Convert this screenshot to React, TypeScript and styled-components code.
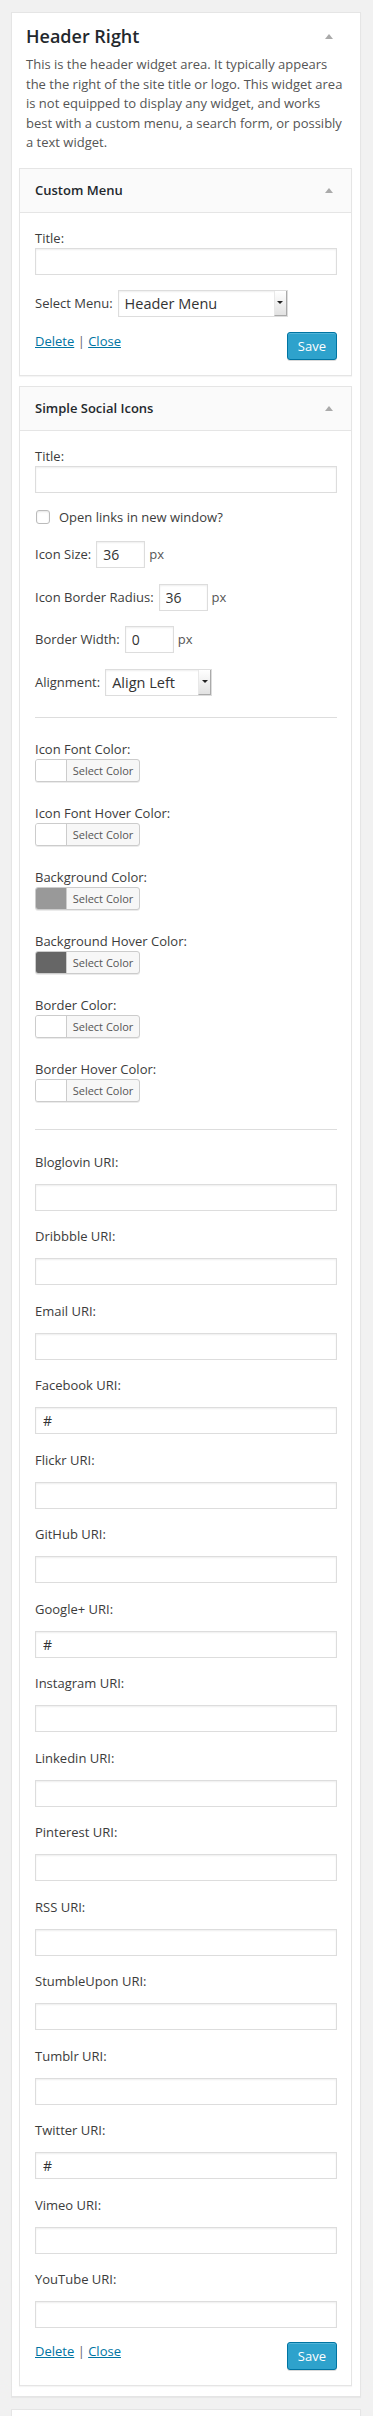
import React from 'react';
import styled, { createGlobalStyle } from 'styled-components';

const GlobalStyle = createGlobalStyle`
  html, body {
    margin: 0;
    padding: 0;
    overflow: hidden;
    background: #f1f1f1;
    font-family: "Open Sans", "Noto Sans", "Liberation Sans", sans-serif;
    color: #444;
  }
  * {
    box-sizing: border-box;
  }
`;

const Page = styled.div`
  padding: 12px 12px 0 11px;
`;

// outer sidebar box ("Header Right")
const SidebarPanel = styled.section`
  background: #fff;
  border: 1px solid #e5e5e5;
  box-shadow: 0 1px 1px rgba(0, 0, 0, 0.04);
  padding: 0 8px 10px 7px;
`;

const SidebarStub = styled(SidebarPanel)`
  margin-top: 12px;
  height: 30px;
`;

const SidebarHead = styled.div`
  display: flex;
  align-items: center;
  justify-content: space-between;
  padding: 11px 19px 0 7px;
`;

const SidebarTitle = styled.h2`
  margin: 0;
  font-size: 18px;
  line-height: 24px;
  font-weight: 600;
  color: #23282d;
`;

const ToggleArrow = styled.span`
  width: 0;
  height: 0;
  border-left: 4px solid transparent;
  border-right: 4px solid transparent;
  border-bottom: 5px solid #aaa;
`;

const Description = styled.p`
  margin: 7px 0 0;
  padding: 0 7px;
  font-size: 13px;
  line-height: 19.5px;
  color: #555;
  white-space: nowrap;
`;

const WidgetList = styled.div`
  display: flex;
  flex-direction: column;
  gap: 10px;
  margin-top: 15px;
`;

const Widget = styled.div`
  background: #fff;
  border: 1px solid #e5e5e5;
  box-shadow: 0 1px 1px rgba(0, 0, 0, 0.04);
`;

const WidgetTop = styled.div`
  display: flex;
  align-items: center;
  justify-content: space-between;
  height: 44px;
  padding: 0 18px 0 15px;
  background: #fafafa;
  border-bottom: 1px solid #e5e5e5;
`;

const WidgetTitle = styled.h3`
  margin: 0;
  font-size: 13px;
  font-weight: 600;
  color: #23282d;
`;

const WidgetBody = styled.div`
  padding: 16px 14px 15px 15px;
`;

const Spaced = styled.div<{ $mt?: number }>`
  margin-top: ${(p) => p.$mt ?? 0}px;
`;

const Label = styled.label`
  display: block;
  font-size: 13px;
  line-height: 18px;
  color: #3c3c3c;
`;

const TextInput = styled.input<{ $mt?: number }>`
  display: block;
  width: 100%;
  height: 27px;
  margin-top: ${(p) => p.$mt ?? 1}px;
  padding: 0 7px;
  border: 1px solid #ddd;
  box-shadow: inset 0 1px 2px rgba(0, 0, 0, 0.07);
  background: #fff;
  font-family: inherit;
  font-size: 14px;
  color: #333;
  outline: none;
`;

const InlineRow = styled.div<{ $mt?: number }>`
  display: flex;
  align-items: center;
  height: 27px;
  margin-top: ${(p) => p.$mt ?? 0}px;
  font-size: 13px;
  color: #3c3c3c;
`;

const SmallInput = styled(TextInput)`
  width: 49px;
  margin: 0 4px 0 5px;
  padding: 0 6px;
  font-size: 14px;
`;

const Unit = styled.span`
  color: #555;
`;

const SelectBox = styled.div<{ $w: number }>`
  display: flex;
  width: ${(p) => p.$w}px;
  height: 27px;
  margin-left: 5px;
  border: 1px solid #ddd;
  background: #fff;
  box-shadow: inset 0 1px 2px rgba(0, 0, 0, 0.07);
`;

const SelectField = styled.select`
  flex: 1;
  min-width: 0;
  appearance: none;
  border: none;
  background: transparent;
  padding: 0 6px;
  font-family: inherit;
  font-size: 14.5px;
  color: #333;
  outline: none;
`;

const SelectCap = styled.span`
  display: flex;
  align-items: center;
  justify-content: center;
  width: 13px;
  background: linear-gradient(#fff, #e2e2e2);
  border-left: 1px solid #e8e8e8;
  border-right: 1px solid #aaa;
  border-bottom: 1px solid #aaa;

  &::after {
    content: '';
    border-left: 3px solid transparent;
    border-right: 3px solid transparent;
    border-top: 3px solid #222;
  }
`;

const CheckRow = styled.label<{ $mt?: number }>`
  display: flex;
  align-items: center;
  height: 18px;
  margin-top: ${(p) => p.$mt ?? 0}px;
  font-size: 13px;
  color: #3c3c3c;
`;

const Checkbox = styled.input`
  appearance: none;
  width: 14px;
  height: 14px;
  margin: 0 9px 0 1px;
  border: 1px solid #bbb;
  border-radius: 3px;
  background: #fff;
  box-shadow: inset 0 1px 2px rgba(0, 0, 0, 0.1);
`;

const Divider = styled.hr<{ $mt: number }>`
  margin: ${(p) => p.$mt}px 0 0;
  border: none;
  border-top: 1px solid #ddd;
`;

const ColorButton = styled.button`
  display: flex;
  width: 105px;
  height: 23px;
  margin-top: 1px;
  padding: 0;
  border: 1px solid #ccc;
  border-radius: 3px;
  overflow: hidden;
  background: #f7f7f7;
  box-shadow: 0 1px 0 rgba(0, 0, 0, 0.08);
`;

const Swatch = styled.span<{ $color: string }>`
  width: 31px;
  height: 100%;
  background: ${(p) => p.$color};
  border-right: 1px solid #ccc;
`;

const ColorText = styled.span`
  flex: 1;
  align-self: center;
  font-family: "Open Sans", "Noto Sans", sans-serif;
  font-size: 11px;
  color: #555;
  text-align: center;
`;

const Actions = styled.div<{ $mt: number }>`
  display: flex;
  justify-content: space-between;
  align-items: flex-start;
  margin-top: ${(p) => p.$mt}px;
`;

const LinkGroup = styled.div`
  font-size: 13px;
  line-height: 18px;
  color: #666;
`;

const ActionLink = styled.a`
  color: #0074a2;
  text-decoration: underline;
`;

const SaveButton = styled.button`
  height: 28px;
  padding: 0 10px;
  border: 1px solid #0074a2;
  border-radius: 3px;
  background: #2ea2cc;
  box-shadow: inset 0 1px 0 rgba(120, 200, 230, 0.5), 0 1px 0 rgba(0, 0, 0, 0.15);
  color: #fff;
  font-family: inherit;
  font-size: 13px;
`;

const colorFields = [
  { label: 'Icon Font Color:', color: '#fff' },
  { label: 'Icon Font Hover Color:', color: '#fff' },
  { label: 'Background Color:', color: '#999' },
  { label: 'Background Hover Color:', color: '#666' },
  { label: 'Border Color:', color: '#fff' },
  { label: 'Border Hover Color:', color: '#fff' },
];

const uriFields = [
  { label: 'Bloglovin URI:', value: '' },
  { label: 'Dribbble URI:', value: '' },
  { label: 'Email URI:', value: '' },
  { label: 'Facebook URI:', value: '#' },
  { label: 'Flickr URI:', value: '' },
  { label: 'GitHub URI:', value: '' },
  { label: 'Google+ URI:', value: '#' },
  { label: 'Instagram URI:', value: '' },
  { label: 'Linkedin URI:', value: '' },
  { label: 'Pinterest URI:', value: '' },
  { label: 'RSS URI:', value: '' },
  { label: 'StumbleUpon URI:', value: '' },
  { label: 'Tumblr URI:', value: '' },
  { label: 'Twitter URI:', value: '#' },
  { label: 'Vimeo URI:', value: '' },
  { label: 'YouTube URI:', value: '' },
];

const WidgetActions: React.FC<{ mt: number }> = ({ mt }) => (
  <Actions $mt={mt}>
    <LinkGroup>
      <ActionLink href="#">Delete</ActionLink> | <ActionLink href="#">Close</ActionLink>
    </LinkGroup>
    <SaveButton type="button">Save</SaveButton>
  </Actions>
);

const Select: React.FC<{ width: number; value: string }> = ({ width, value }) => (
  <SelectBox $w={width}>
    <SelectField defaultValue={value}>
      <option>{value}</option>
    </SelectField>
    <SelectCap />
  </SelectBox>
);

const App: React.FC = () => {
  return (
    <Page>
      <GlobalStyle />
      <SidebarPanel>
        <SidebarHead>
          <SidebarTitle>Header Right</SidebarTitle>
          <ToggleArrow />
        </SidebarHead>
        <Description>
          This is the header widget area. It typically appears
          <br />
          the the right of the site title or logo. This widget area
          <br />
          is not equipped to display any widget, and works
          <br />
          best with a custom menu, a search form, or possibly
          <br />
          a text widget.
        </Description>

        <WidgetList>
          {/* Custom Menu widget */}
          <Widget>
            <WidgetTop>
              <WidgetTitle>Custom Menu</WidgetTitle>
              <ToggleArrow />
            </WidgetTop>
            <WidgetBody>
              <Label>Title:</Label>
              <TextInput type="text" />
              <InlineRow $mt={15}>
                Select Menu:
                <Select width={170} value="Header Menu" />
              </InlineRow>
              <WidgetActions mt={15} />
            </WidgetBody>
          </Widget>

          {/* Simple Social Icons widget */}
          <Widget>
            <WidgetTop>
              <WidgetTitle>Simple Social Icons</WidgetTitle>
              <ToggleArrow />
            </WidgetTop>
            <WidgetBody>
              <Label>Title:</Label>
              <TextInput type="text" />
              <CheckRow $mt={15}>
                <Checkbox type="checkbox" />
                Open links in new window?
              </CheckRow>
              <InlineRow $mt={15}>
                Icon Size:
                <SmallInput type="text" defaultValue="36" $mt={0} />
                <Unit>px</Unit>
              </InlineRow>
              <InlineRow $mt={16}>
                Icon Border Radius:
                <SmallInput type="text" defaultValue="36" $mt={0} />
                <Unit>px</Unit>
              </InlineRow>
              <InlineRow $mt={15}>
                Border Width:
                <SmallInput type="text" defaultValue="0" $mt={0} />
                <Unit>px</Unit>
              </InlineRow>
              <InlineRow $mt={16}>
                Alignment:
                <Select width={107} value="Align Left" />
              </InlineRow>

              <Divider $mt={21} />

              {colorFields.map((f) => (
                <Spaced key={f.label} $mt={22}>
                  <Label>{f.label}</Label>
                  <ColorButton type="button">
                    <Swatch $color={f.color} />
                    <ColorText>Select Color</ColorText>
                  </ColorButton>
                </Spaced>
              ))}

              <Divider $mt={27} />

              {uriFields.map((f, i) => (
                <Spaced key={f.label} $mt={i === 0 ? 23 : 16.5}>
                  <Label>{f.label}</Label>
                  <TextInput type="text" defaultValue={f.value} $mt={13} />
                </Spaced>
              ))}

              <WidgetActions mt={14} />
            </WidgetBody>
          </Widget>
        </WidgetList>
      </SidebarPanel>
      <SidebarStub />
    </Page>
  );
};

export default App;
